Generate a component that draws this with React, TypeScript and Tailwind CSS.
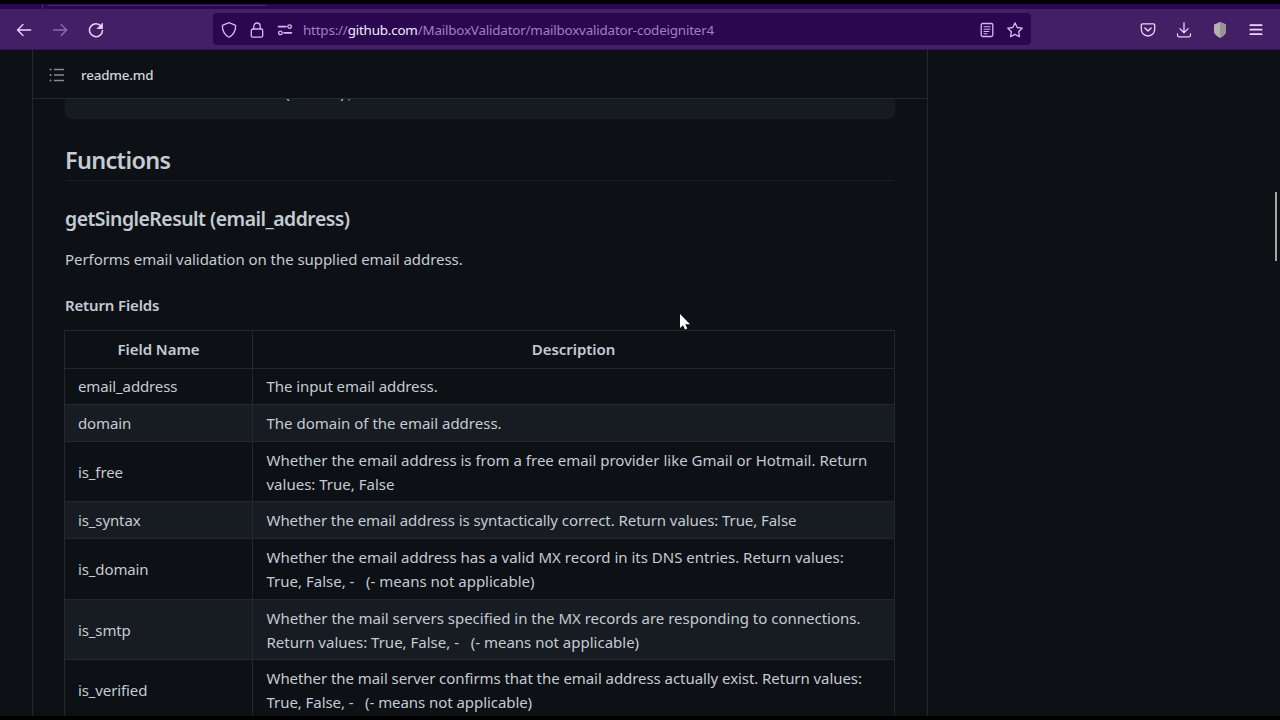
import type { ReactNode } from "react";

type Row = { name: string; lines: string[]; height: string; tracking?: string };

const ROWS: Row[] = [
  { name: "email_address", lines: ["The input email address."], height: "h-[37px]", tracking: "tracking-[-0.08px]" },
  { name: "domain", lines: ["The domain of the email address."], height: "h-[37px]" },
  {
    name: "is_free",
    lines: [
      "Whether the email address is from a free email provider like Gmail or Hotmail. Return",
      "values: True, False",
    ],
    height: "h-[60px]",
  },
  {
    name: "is_syntax",
    lines: ["Whether the email address is syntactically correct. Return values: True, False"],
    height: "h-[37px]",
    tracking: "tracking-[-0.07px]",
  },
  {
    name: "is_domain",
    lines: [
      "Whether the email address has a valid MX record in its DNS entries. Return values:",
      "True, False, -\u00a0\u00a0 (- means not applicable)",
    ],
    height: "h-[61px]",
  },
  {
    name: "is_smtp",
    lines: [
      "Whether the mail servers specified in the MX records are responding to connections.",
      "Return values: True, False, -\u00a0\u00a0 (- means not applicable)",
    ],
    height: "h-[60px]",
  },
  {
    name: "is_verified",
    lines: [
      "Whether the mail server confirms that the email address actually exist. Return values:",
      "True, False, -\u00a0\u00a0 (- means not applicable)",
    ],
    height: "h-[60px]",
    tracking: "tracking-[-0.06px]",
  },
];

function Icon({ children, className = "" }: { children: ReactNode; className?: string }) {
  return (
    <svg
      viewBox="0 0 16 16"
      fill="none"
      stroke="currentColor"
      strokeWidth="1.3"
      strokeLinecap="round"
      strokeLinejoin="round"
      className={`h-4 w-4 shrink-0 ${className}`}
    >
      {children}
    </svg>
  );
}

function Toolbar() {
  return (
    <div className="flex h-[41px] shrink-0 items-center border-b border-[#341552] bg-[#432065] text-[#ecd5fb]">
      <div className="flex w-[213px] items-center gap-5 pt-[2px] pl-4">
        <Icon>
          <path d="M14.7 8H1.5M7 2.5 1.5 8 7 13.5" />
        </Icon>
        <Icon className="text-[#8d6aaa]">
          <path d="M1.5 8h13M9.2 2.5 14.7 8l-5.5 5.5" />
        </Icon>
        <Icon>
          <path d="M13 4A6.500 6.500 0 1 0 14.500 8.500" strokeWidth="1.500" />
          <path d="M14.500 1.500v5H9.500z" fill="currentColor" strokeWidth=".8" />
        </Icon>
      </div>
      <div className="flex h-8 w-[818px] items-center rounded bg-[#2b074f] px-2 pt-[2px] text-[#d9b8ef]">
        <Icon>
          <path d="M8 .7 14.6 3.3c.2 5-1.800 9.400-6.600 12C3.200 12.700 1.200 8.300 1.400 3.300z" />
        </Icon>
        <Icon className="ml-3">
          <path d="M4.800 7V4.200a3.200 3.200 0 0 1 6.400 0V7" />
          <rect x="2.300" y="7" width="11.400" height="8.200" rx="1.500" />
        </Icon>
        <Icon className="ml-3">
          <path d="M1.500 4.600h7.500M7 10.900h7.500" strokeWidth="1.600" />
          <circle cx="12.600" cy="4.600" r="1.800" />
          <circle cx="3.400" cy="10.900" r="1.800" />
        </Icon>
        <span className="ml-[10px] text-[13.4px] tracking-[-0.19px] whitespace-pre text-[#a27fc0]">
          https://<span className="text-[#f5eafd]">github.com</span>/MailboxValidator/mailboxvalidator-codeigniter4
        </span>
        <Icon className="ml-auto">
          <rect x="2.200" y="1.500" width="11.600" height="13" rx="1.500" />
          <path d="M5 4.700h6M5 7.200h6M5 9.500h5M5 11.700h3" strokeWidth="1.100" />
        </Icon>
        <Icon className="ml-3">
          <path d="m8 .9 2.200 4.600 5 .7-3.600 3.500.9 5L8 12.400l-4.500 2.300.9-5L.8 6.200l5-.7z" />
        </Icon>
      </div>
      <div className="ml-auto flex items-center gap-5 pt-[2px] pr-4">
        <Icon>
          <path d="M2.500 1.900h11c.7 0 1.200.5 1.200 1.200v4.200a6.700 6.700 0 0 1-13.400 0V3.100c0-.7.5-1.200 1.200-1.200z" />
          <path d="M4.900 6 8 9l3.100-3" strokeWidth="1.500" />
        </Icon>
        <Icon>
          <path d="M8 .8v9.800M3.900 6.600 8 10.700l4.100-4.100M1.500 11.800v1.500c0 .8.700 1.500 1.500 1.500h10c.8 0 1.500-.7 1.500-1.500v-1.500" />
        </Icon>
        <Icon>
          <path d="M8 0 14 2.500v7.800C13 13 10 15 8 16 6 15 3 13 2 10.300V2.500z" fill="#b5b1b2" stroke="none" />
          <path d="M8 0 14 2.500v7.800C13 13 10 15 8 16z" fill="#979498" stroke="none" />
        </Icon>
        <Icon>
          <path d="M2.300 3.200h11.400M2.300 7.700h11.400M2.300 12.200h11.400" strokeWidth="1.700" />
        </Icon>
      </div>
    </div>
  );
}

function FieldTable() {
  return (
    <div className="mt-[13px] -ml-px w-[831px] border-t border-l border-[#24282e]">
      <div className="grid h-[37px] grid-cols-[188px_1fr] text-center leading-[37px] font-semibold tracking-[-0.05px]">
        <div className="border-r border-b border-[#24282e]">Field Name</div>
        <div className="border-r border-b border-[#24282e]">Description</div>
      </div>
      {ROWS.map((row) => (
        <div
          key={row.name}
          className={`grid grid-cols-[188px_1fr] even:bg-[#0d1015] odd:bg-[#171b22] ${row.height}`}
        >
          <div className="flex items-center border-r border-b border-[#24282e] pl-[13px] tracking-[-0.12px]">
            {row.name}
          </div>
          <div
            className={`flex flex-col justify-center border-r border-b border-[#24282e] pl-[13.5px] whitespace-nowrap ${row.tracking ?? ""}`}
          >
            {row.lines.map((line) => (
              <p key={line}>{line}</p>
            ))}
          </div>
        </div>
      ))}
    </div>
  );
}

function Readme() {
  return (
    <main className="ml-8 flex w-[896px] flex-col border-x border-[#24282d]">
      <header className="flex h-[49px] shrink-0 items-center border-b border-[#24282d] pt-px pl-4 text-[13.4px] font-medium tracking-[-0.2px] text-[#d0d5da]">
        <Icon className="mr-4 text-[#858c94]">
          <path d="M5.500 2.500h9M5.500 8h9M5.500 13.500h9" />
          <path d="M1.500 2.500h.1M1.500 8h.1M1.500 13.500h.1" strokeWidth="1.800" />
        </Icon>
        readme.md
      </header>
      <article className="px-8">
        <div className="flex h-5 w-[830px] overflow-hidden rounded-b-md bg-[#161a21] pl-[211px] font-[Liberation_Mono] text-[13px] leading-4">
          <span className="-mt-3 whitespace-pre">{" ($email);"}</span>
        </div>
        <h2 className="mt-[22px] h-10 border-b border-[#191d22] text-[23.4px] leading-[38px] font-semibold tracking-[-0.65px]">
          Functions
        </h2>
        <h3 className="mt-6 text-[19.4px] leading-7 font-semibold tracking-[-0.5px]">
          getSingleResult (email_address)
        </h3>
        <p className="mt-[14px] tracking-[-0.05px]">Performs email validation on the supplied email address.</p>
        <h4 className="mt-[22px] font-semibold tracking-[-0.15px]">Return Fields</h4>
        <FieldTable />
      </article>
    </main>
  );
}

export default function App() {
  return (
    <div className="relative flex h-[720px] w-[1280px] flex-col overflow-hidden border-t-4 border-b-4 border-black bg-[#0d1115] font-['Noto_Sans',sans-serif] text-[15px] leading-6 text-[#c5cbd2]">
      <div className="flex h-[5px] shrink-0 bg-[#2a0850]">
        <div className="w-[43px] border-r border-[#4b2b6d]" />
        <div className="ml-1 h-[2px] w-[220px] rounded-b border-b border-[#4b2b6d]" />
      </div>
      <Toolbar />
      <div className="flex min-h-0 flex-1 overflow-hidden">
        <Readme />
        <div className="mt-[142px] mr-[3px] ml-auto h-[69px] w-[2px] bg-[#a5a5a5]" />
      </div>
      <svg viewBox="0 0 12 18" className="absolute top-[309px] left-[679px] h-[18px] w-3">
        <path d="M1 1v14l3-2.700 2 4.200 2.300-1-2-4.200H11z" fill="#fff" />
      </svg>
    </div>
  );
}
